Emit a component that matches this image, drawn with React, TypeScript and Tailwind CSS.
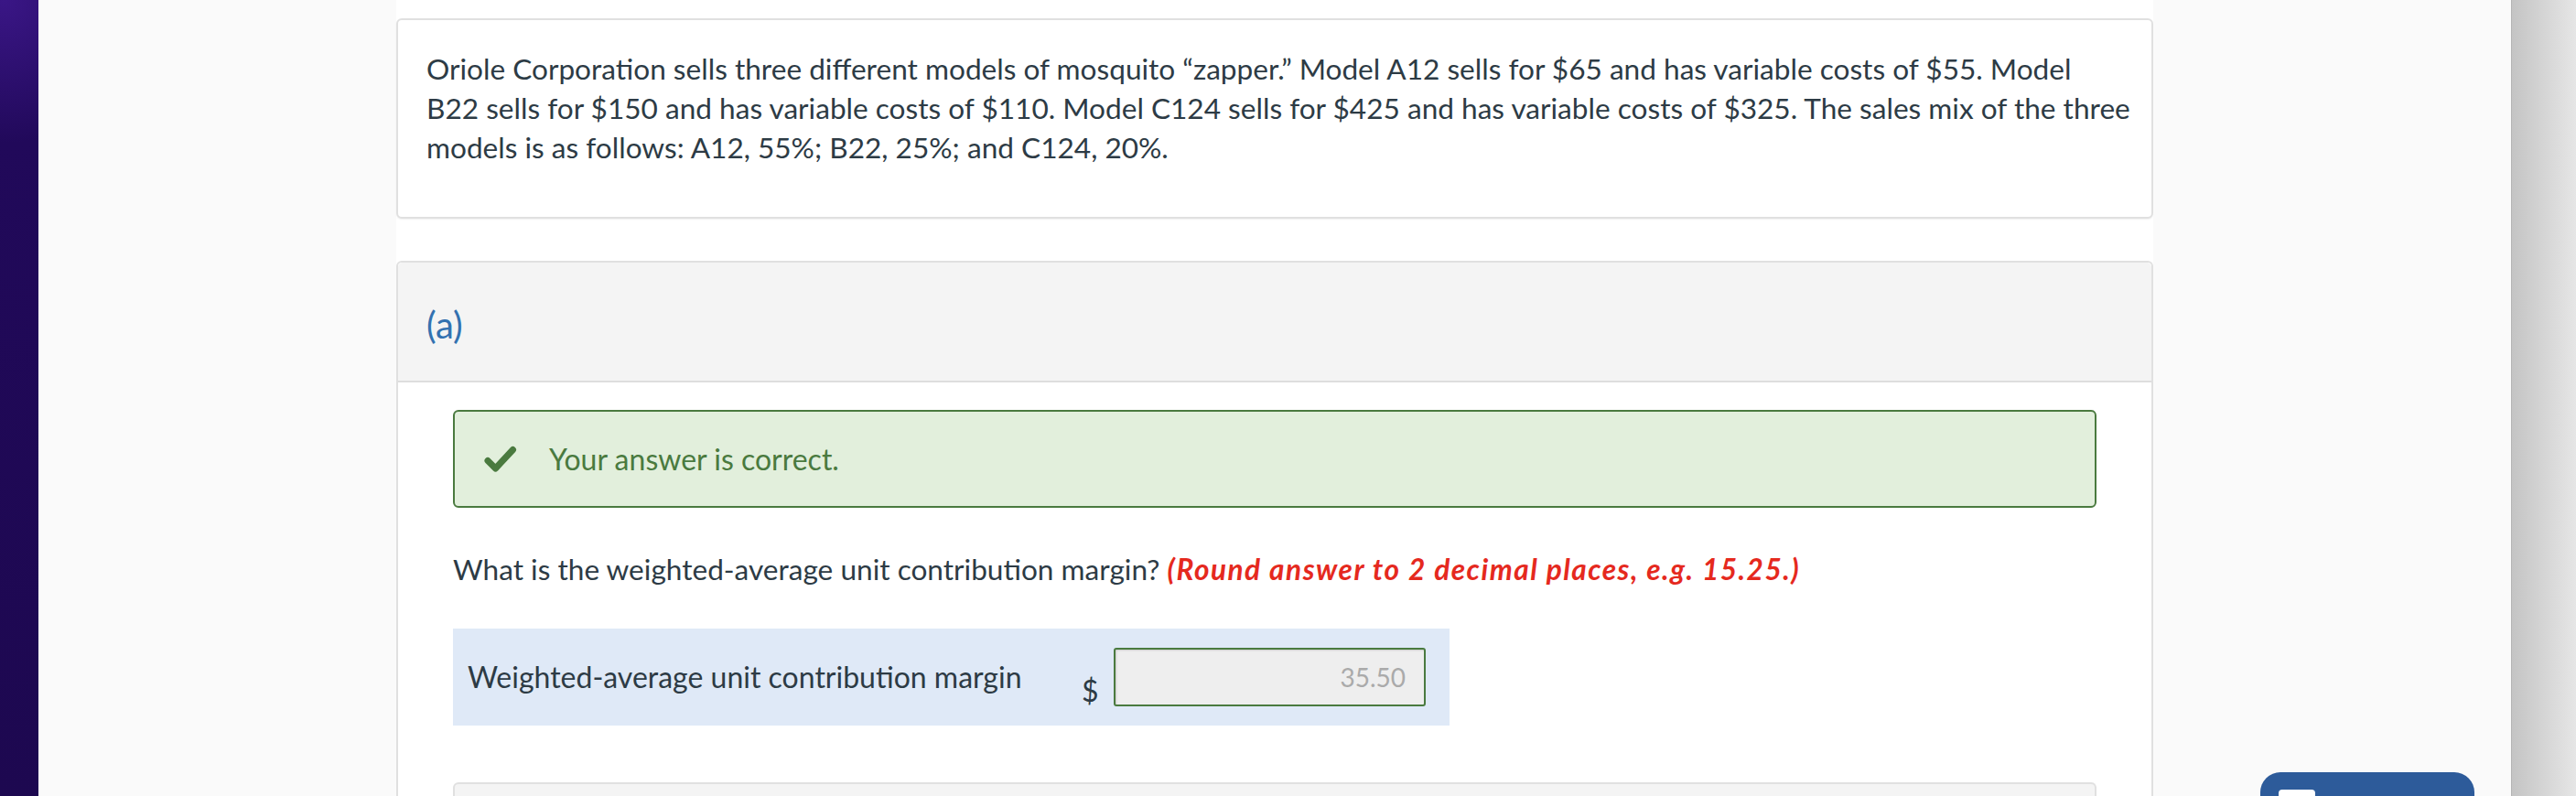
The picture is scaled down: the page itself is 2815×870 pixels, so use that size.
import React from "react";

function CheckMark() {
  return (
    <svg width="38" height="32" viewBox="0 0 38 32" fill="none" className="shrink-0">
      <path
        d="M5 17.5 L13.5 26 L32.5 5.5"
        stroke="#4a7a3f"
        strokeWidth="7"
        strokeLinecap="round"
        strokeLinejoin="round"
      />
    </svg>
  );
}

const problemLines = [
  "Oriole Corporation sells three different models of mosquito “zapper.” Model A12 sells for $65 and has variable costs of $55. Model",
  "B22 sells for $150 and has variable costs of $110. Model C124 sells for $425 and has variable costs of $325. The sales mix of the three",
  "models is as follows: A12, 55%; B22, 25%; and C124, 20%.",
];

function ProblemCard() {
  return (
    <div className="mt-[17px] rounded-[6px] border-2 border-[#e0e0e0] bg-white pl-[31px] pr-[20px] pt-[32px] pb-[54px] shadow-[0_1px_2px_rgba(0,0,0,0.06)]">
      {problemLines.map((line) => (
        <p key={line} className="whitespace-nowrap text-[31.6px] leading-[43px] text-[#2d3b45]">
          {line}
        </p>
      ))}
    </div>
  );
}

function PartCard() {
  return (
    <div className="mt-[46px] flex-1 rounded-t-[6px] border-2 border-b-0 border-[#e0e0e0] bg-white">
      {/* header */}
      <div className="flex h-[131px] items-center rounded-t-[5px] border-b-2 border-[#dedede] bg-[#f4f4f4] pl-[31px]">
        <span className="mt-[6px] text-[40px] leading-none text-[#3371b0]">(a)</span>
      </div>

      <div className="px-[60px] pt-[30px]">
        {/* result banner */}
        <div className="flex h-[107px] items-center rounded-[6px] border-2 border-[#4a7a3f] bg-[#e2efdc] pl-[31px]">
          <CheckMark />
          <span className="ml-[34px] text-[32px] text-[#4a7a3f]">Your answer is correct.</span>
        </div>

        <p className="mt-[46px] whitespace-nowrap text-[31.6px] leading-[43px] text-[#2d3b45]">
          What is the weighted-average unit contribution margin?{" "}
          <span className="font-bold italic tracking-[1.5px] text-[#e5291e]">(Round answer to 2 decimal places, e.g. 15.25.)</span>
        </p>

        {/* answer row */}
        <div className="mt-[43px] flex h-[106px] w-[1089px] items-center bg-[#dfe9f7] pl-[16px]">
          <span className="w-[671px] text-[32px] text-[#2d3b45]">Weighted-average unit contribution margin</span>
          <span className="mt-[30px] w-[35px] text-[32px] text-[#2d3b45]">$</span>
          <div className="flex h-[64px] w-[341px] items-center justify-end rounded-[3px] border-2 border-[#4a7a3f] bg-[#eeeeee] pr-[20px] shadow-[inset_1px_1px_2px_rgba(0,0,0,0.15)]">
            <span className="text-[28px] text-[#aaaaaa]">35.50</span>
          </div>
        </div>

        {/* next part */}
        <div className="mt-[62px] h-[40px] rounded-t-[6px] border-2 border-b-0 border-[#e0e0e0] bg-[#f4f4f4]" />
      </div>
    </div>
  );
}

export default function App() {
  return (
    <div className="flex h-[870px] w-[2815px] overflow-hidden font-['Lato','Noto_Sans',sans-serif]">
      {/* purple rail */}
      <div className="w-[42px] shrink-0 bg-[radial-gradient(circle_at_10%_0%,#3a1686_0%,#21095a_18%,#1d0850_100%)]" />

      {/* left gutter */}
      <div className="w-[391px] shrink-0 bg-[#fafafa]" />

      {/* content column */}
      <div className="flex w-[1920px] shrink-0 flex-col bg-white pt-[3px]">
        <div className="h-[2px] bg-[#e8e8e8]" />
        <ProblemCard />
        <PartCard />
      </div>

      {/* right gutter */}
      <div className="relative w-[391px] shrink-0 bg-[#fafafa]">
        <div className="absolute left-[117px] top-[844px] h-[80px] w-[234px] rounded-[22px] bg-[#2d5b9a]">
          <div className="ml-[20px] mt-[19px] h-[30px] w-[40px] rounded-[4px] bg-white" />
        </div>
      </div>

      {/* page shadow */}
      <div className="flex-1 border-l border-[#b4b4b4] bg-gradient-to-r from-[#c4c4c4] to-[#e6e6e6]" />
    </div>
  );
}
